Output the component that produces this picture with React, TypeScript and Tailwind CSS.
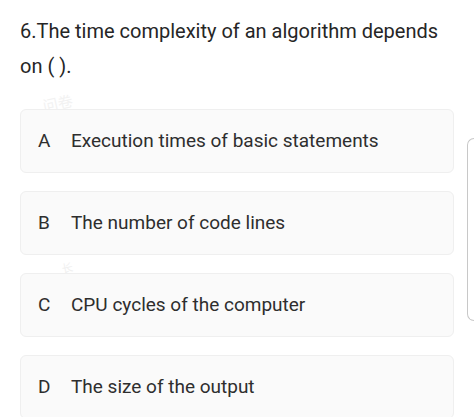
import React from "react";

const options = [
  { key: "A", text: "Execution times of basic statements" },
  { key: "B", text: "The number of code lines" },
  { key: "C", text: "CPU cycles of the computer" },
  { key: "D", text: "The size of the output" },
];

export default function App() {
  return (
    <div
      className="relative w-[474px] h-[417px] overflow-hidden bg-white"
      style={{ fontFamily: "Roboto, 'Noto Sans CJK SC', sans-serif" }}
    >
      <div className="pl-[20px] pr-[20px] pt-[14px] text-[20px] leading-[35px] text-[#262626]">
        6.The time complexity of an algorithm depends on ( ).
      </div>

      <div className="absolute left-[43px] top-[93px] text-[15px] text-[#f2f2f2] -rotate-12 select-none">
        问卷
      </div>
      <div className="absolute left-[62px] top-[261px] text-[11px] text-[#f0f0f0] -rotate-12 select-none">
        长
      </div>

      <div className="relative mt-[25px] ml-[20px] w-[434px] flex flex-col gap-[18px]">
        {options.map((o) => (
          <div
            key={o.key}
            className="flex items-center h-[64px] rounded-[6px] border border-[#efefef] bg-[#fafafa] pl-[17px] text-[19px] text-[#2e2e2e]"
          >
            <span className="w-[33px] shrink-0">{o.key}</span>
            <span>{o.text}</span>
          </div>
        ))}
      </div>

      <div className="absolute left-[467px] top-[138px] w-[20px] h-[183px] rounded-l-[7px] border border-r-0 border-[#c8c8c8]" />
    </div>
  );
}
